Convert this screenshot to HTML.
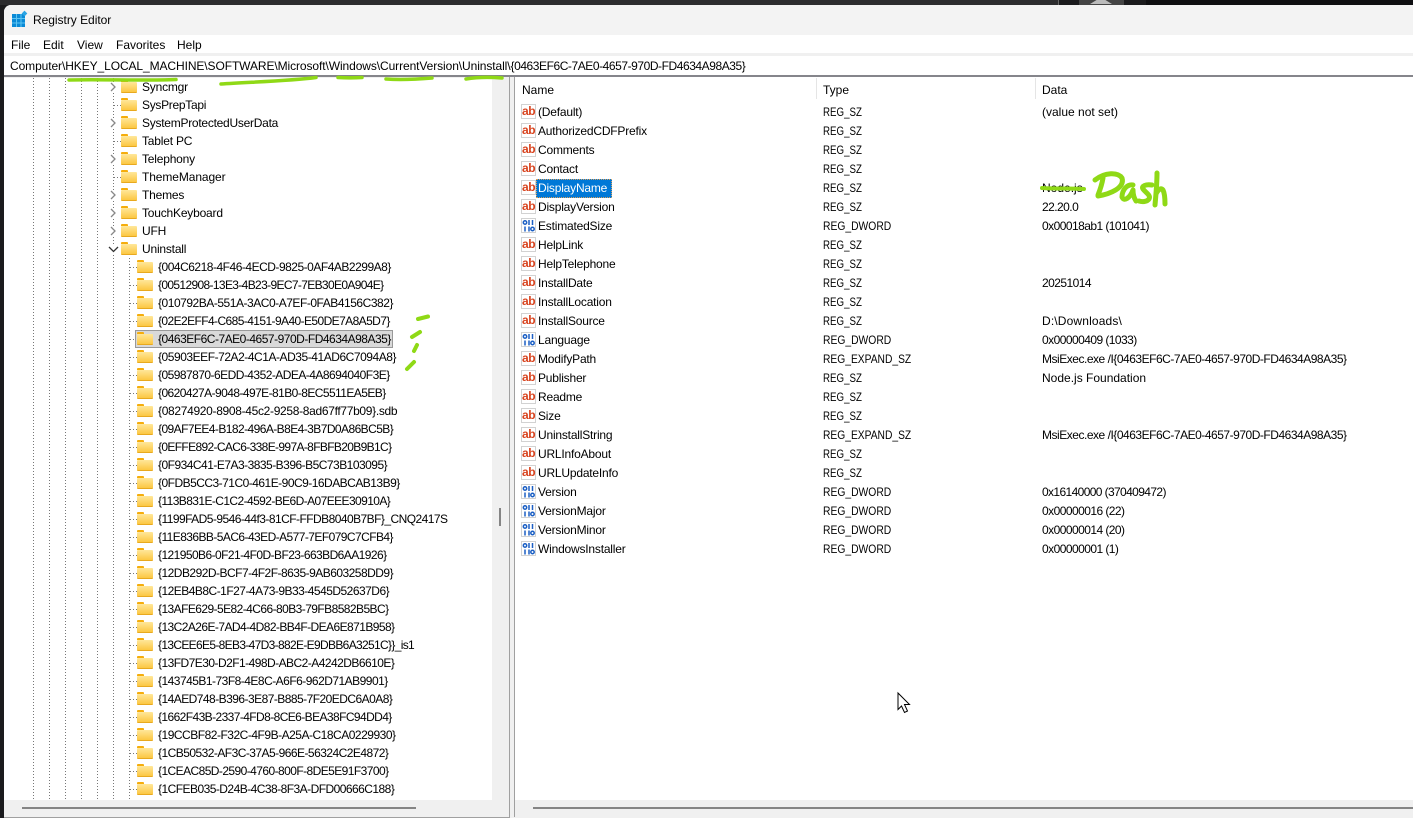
<!DOCTYPE html>
<html><head><meta charset="utf-8"><title>Registry Editor</title>
<style>
html,body{margin:0;padding:0;width:1413px;height:818px;overflow:hidden;background:#1b1b1d;font-family:"Liberation Sans",sans-serif;font-size:12px;color:#000}
.a{position:absolute}
#win{position:absolute;left:4px;top:5px;width:1409px;height:813px;background:#f0f0f0;border-top-left-radius:7px;overflow:hidden}
.m{position:absolute;top:38px;line-height:15px;font-size:12px}
#tree{position:absolute;left:4px;top:78px;width:488px;height:722px;background:#fff;overflow:hidden}
.r{position:absolute;height:18px;line-height:18px;white-space:nowrap;letter-spacing:-.54px}
.n{letter-spacing:-.2px}
.f{position:absolute;width:16px;height:11px;margin-top:1px;border-radius:1px;background:linear-gradient(#ffe79a,#fcc743);border:0 solid #e8a91f;border-bottom-width:1px;box-sizing:border-box}
.f:before{content:"";position:absolute;left:0;top:-2px;width:7px;height:2px;background:#f5ad0c;border-radius:1px 1px 0 0}
.v{position:absolute;width:1px;background:repeating-linear-gradient(#777 0 1px,transparent 1px 3px)}
.h{position:absolute;height:1px;background:repeating-linear-gradient(90deg,#777 0 1px,transparent 1px 3px)}
#list{position:absolute;left:515px;top:77px;width:898px;height:723px;background:#fff;overflow:hidden}
.t{position:absolute;line-height:19px;height:19px;white-space:nowrap;letter-spacing:-.2px}
.y{letter-spacing:0}
.x{letter-spacing:-.55px}
.g{letter-spacing:-.48px}
.sz,.ex,.dw{letter-spacing:0;transform-origin:0 0}
.sz{transform:scaleX(.81)}
.ex{transform:scaleX(.855)}
.dw{transform:scaleX(.86)}
.ab{position:absolute;width:15px;height:15px;left:6px;box-sizing:border-box;border:1px solid #d2d2d2;background:#fff;font-weight:bold;font-size:12px;line-height:12px;color:#d8431e;text-align:center;letter-spacing:-.4px}
.d{position:absolute;left:6px}
</style></head><body>
<div class="a" style="left:0;top:0;width:1058px;height:5px;background:#2c2c2e"></div>
<div class="a" style="left:1058px;top:0;width:1px;height:5px;background:#666"></div>
<div class="a" style="left:1079px;top:0;width:45px;height:5px;background:#444"></div>
<div class="a" style="left:1090px;top:0;width:22px;height:4px;background:#bbb;clip-path:polygon(30% 0,70% 0,100% 100%,0 100%)"></div>
<div class="a" style="left:1146px;top:0;width:267px;height:5px;background:#0f0f11"></div>
<div id="win"></div>
<div class="a" style="left:4px;top:5px;width:1409px;height:30px;background:#f3f3f3;border-top-left-radius:7px"></div>
<svg class="a" style="left:11px;top:10px" width="18" height="18" viewBox="0 0 18 18"><rect x="1" y="4" width="13" height="13" fill="#0a8ad6"/><path d="M5.500 4v13M10 4v13M1 8.500h13M1 13h13" stroke="#5cc4f2" stroke-width="1"/><rect x="11.500" y="1.500" width="4" height="4" fill="#2aa4e4" transform="rotate(45 13.500 3.500)"/></svg>
<div class="a" style="left:33px;top:12px;line-height:16px;letter-spacing:-.03px">Registry Editor</div>
<div class="a" style="left:4px;top:35px;width:1409px;height:18px;background:#fff"></div>
<div class="m" style="left:11px">File</div><div class="m" style="left:43px">Edit</div><div class="m" style="left:77px">View</div><div class="m" style="left:116px">Favorites</div><div class="m" style="left:177px">Help</div>
<div class="a" style="left:4px;top:56px;width:1409px;height:19px;background:#fff"></div>
<div class="a" style="left:10px;top:58px;line-height:17px;white-space:nowrap;letter-spacing:-.09px">Computer\HKEY_LOCAL_MACHINE\SOFTWARE\Microsoft\Windows\CurrentVersion\Uninstall\<span style="letter-spacing:-.44px">{0463EF6C-7AE0-4657-970D-FD4634A98A35}</span></div>
<div class="a" style="left:4px;top:75px;width:1409px;height:2px;background:#85858b"></div>

<div id="tree">
<div class="v" style="left:29px;top:0;height:722px"></div><div class="v" style="left:45px;top:0;height:722px"></div><div class="v" style="left:61px;top:0;height:722px"></div><div class="v" style="left:77px;top:0;height:722px"></div><div class="v" style="left:93px;top:0;height:722px"></div><div class="v" style="left:109px;top:0;height:722px"></div><div class="v" style="left:125px;top:180px;height:542px"></div>

<svg class="a" style="left:104px;top:4px;background:#fff" width="10" height="10"><path d="M3 1l4 4-4 4" fill="none" stroke="#888" stroke-width="1.300"/></svg><div class="f" style="left:117px;top:3px"></div><div class="r n" style="left:138px;top:0">Syncmgr</div>
<div class="h" style="left:110px;top:27px;width:7px"></div><div class="f" style="left:117px;top:21px"></div><div class="r n" style="left:138px;top:18px;letter-spacing:-.3px">SysPrepTapi</div>
<svg class="a" style="left:104px;top:40px;background:#fff" width="10" height="10"><path d="M3 1l4 4-4 4" fill="none" stroke="#888" stroke-width="1.300"/></svg><div class="f" style="left:117px;top:39px"></div><div class="r n" style="left:138px;top:36px;letter-spacing:-.26px">SystemProtectedUserData</div>
<div class="h" style="left:110px;top:63px;width:7px"></div><div class="f" style="left:117px;top:57px"></div><div class="r n" style="left:138px;top:54px">Tablet PC</div>
<svg class="a" style="left:104px;top:76px;background:#fff" width="10" height="10"><path d="M3 1l4 4-4 4" fill="none" stroke="#888" stroke-width="1.300"/></svg><div class="f" style="left:117px;top:75px"></div><div class="r n" style="left:138px;top:72px">Telephony</div>
<div class="h" style="left:110px;top:99px;width:7px"></div><div class="f" style="left:117px;top:93px"></div><div class="r n" style="left:138px;top:90px;letter-spacing:-.1px">ThemeManager</div>
<svg class="a" style="left:104px;top:112px;background:#fff" width="10" height="10"><path d="M3 1l4 4-4 4" fill="none" stroke="#888" stroke-width="1.300"/></svg><div class="f" style="left:117px;top:111px"></div><div class="r n" style="left:138px;top:108px">Themes</div>
<svg class="a" style="left:104px;top:130px;background:#fff" width="10" height="10"><path d="M3 1l4 4-4 4" fill="none" stroke="#888" stroke-width="1.300"/></svg><div class="f" style="left:117px;top:129px"></div><div class="r n" style="left:138px;top:126px">TouchKeyboard</div>
<svg class="a" style="left:104px;top:148px;background:#fff" width="10" height="10"><path d="M3 1l4 4-4 4" fill="none" stroke="#888" stroke-width="1.300"/></svg><div class="f" style="left:117px;top:147px"></div><div class="r n" style="left:138px;top:144px">UFH</div>
<svg class="a" style="left:104px;top:166px;background:#fff" width="11" height="10"><path d="M1 3l4.500 4.500L10 3" fill="none" stroke="#333" stroke-width="1.300"/></svg><div class="f" style="left:117px;top:165px"></div><div class="r n" style="left:138px;top:162px">Uninstall</div>

<div class="h" style="left:126px;top:189px;width:7px"></div><div class="f" style="left:133px;top:183px"></div><div class="r" style="left:154px;top:180px;letter-spacing:-.49px">{004C6218-4F46-4ECD-9825-0AF4AB2299A8}</div>
<div class="h" style="left:126px;top:207px;width:7px"></div><div class="f" style="left:133px;top:201px"></div><div class="r" style="left:154px;top:198px;letter-spacing:-.65px">{00512908-13E3-4B23-9EC7-7EB30E0A904E}</div>
<div class="h" style="left:126px;top:225px;width:7px"></div><div class="f" style="left:133px;top:219px"></div><div class="r" style="left:154px;top:216px;letter-spacing:-.47px">{010792BA-551A-3AC0-A7EF-0FAB4156C382}</div>
<div class="h" style="left:126px;top:243px;width:7px"></div><div class="f" style="left:133px;top:237px"></div><div class="r" style="left:154px;top:234px;letter-spacing:-.59px">{02E2EFF4-C685-4151-9A40-E50DE7A8A5D7}</div>
<div class="a" style="left:131px;top:252px;width:258px;height:18px;box-sizing:border-box;background:#d9d9d9;border:1px solid #999"></div>
<div class="h" style="left:126px;top:261px;width:5px"></div><div class="f" style="left:133px;top:255px"></div><div class="r" style="left:154px;top:252px;letter-spacing:-.49px">{0463EF6C-7AE0-4657-970D-FD4634A98A35}</div>
<div class="h" style="left:126px;top:279px;width:7px"></div><div class="f" style="left:133px;top:273px"></div><div class="r" style="left:154px;top:270px;letter-spacing:-.46px">{05903EEF-72A2-4C1A-AD35-41AD6C7094A8}</div>
<div class="h" style="left:126px;top:297px;width:7px"></div><div class="f" style="left:133px;top:291px"></div><div class="r" style="left:154px;top:288px">{05987870-6EDD-4352-ADEA-4A8694040F3E}</div>
<div class="h" style="left:126px;top:315px;width:7px"></div><div class="f" style="left:133px;top:309px"></div><div class="r" style="left:154px;top:306px;letter-spacing:-.57px">{0620427A-9048-497E-81B0-8EC5511EA5EB}</div>
<div class="h" style="left:126px;top:333px;width:7px"></div><div class="f" style="left:133px;top:327px"></div><div class="r" style="left:154px;top:324px;letter-spacing:-.32px">{08274920-8908-45c2-9258-8ad67ff77b09}.sdb</div>
<div class="h" style="left:126px;top:351px;width:7px"></div><div class="f" style="left:133px;top:345px"></div><div class="r" style="left:154px;top:342px;letter-spacing:-.57px">{09AF7EE4-B182-496A-B8E4-3B7D0A86BC5B}</div>
<div class="h" style="left:126px;top:369px;width:7px"></div><div class="f" style="left:133px;top:363px"></div><div class="r" style="left:154px;top:360px;letter-spacing:-.65px">{0EFFE892-CAC6-338E-997A-8FBFB20B9B1C}</div>
<div class="h" style="left:126px;top:387px;width:7px"></div><div class="f" style="left:133px;top:381px"></div><div class="r" style="left:154px;top:378px;letter-spacing:-.52px">{0F934C41-E7A3-3835-B396-B5C73B103095}</div>
<div class="h" style="left:126px;top:405px;width:7px"></div><div class="f" style="left:133px;top:399px"></div><div class="r" style="left:154px;top:396px;letter-spacing:-.52px">{0FDB5CC3-71C0-461E-90C9-16DABCAB13B9}</div>
<div class="h" style="left:126px;top:423px;width:7px"></div><div class="f" style="left:133px;top:417px"></div><div class="r" style="left:154px;top:414px;letter-spacing:-.59px">{113B831E-C1C2-4592-BE6D-A07EEE30910A}</div>
<div class="h" style="left:126px;top:441px;width:7px"></div><div class="f" style="left:133px;top:435px"></div><div class="r" style="left:154px;top:432px;letter-spacing:-.55px">{1199FAD5-9546-44f3-81CF-FFDB8040B7BF}_CNQ2417S</div>
<div class="h" style="left:126px;top:459px;width:7px"></div><div class="f" style="left:133px;top:453px"></div><div class="r" style="left:154px;top:450px;letter-spacing:-.57px">{11E836BB-5AC6-43ED-A577-7EF079C7CFB4}</div>
<div class="h" style="left:126px;top:477px;width:7px"></div><div class="f" style="left:133px;top:471px"></div><div class="r" style="left:154px;top:468px;letter-spacing:-.57px">{121950B6-0F21-4F0D-BF23-663BD6AA1926}</div>
<div class="h" style="left:126px;top:495px;width:7px"></div><div class="f" style="left:133px;top:489px"></div><div class="r" style="left:154px;top:486px;letter-spacing:-.52px">{12DB292D-BCF7-4F2F-8635-9AB603258DD9}</div>
<div class="h" style="left:126px;top:513px;width:7px"></div><div class="f" style="left:133px;top:507px"></div><div class="r" style="left:154px;top:504px;letter-spacing:-.52px">{12EB4B8C-1F27-4A73-9B33-4545D52637D6}</div>
<div class="h" style="left:126px;top:531px;width:7px"></div><div class="f" style="left:133px;top:525px"></div><div class="r" style="left:154px;top:522px;letter-spacing:-.57px">{13AFE629-5E82-4C66-80B3-79FB8582B5BC}</div>
<div class="h" style="left:126px;top:549px;width:7px"></div><div class="f" style="left:133px;top:543px"></div><div class="r" style="left:154px;top:540px;letter-spacing:-.57px">{13C2A26E-7AD4-4D82-BB4F-DEA6E871B958}</div>
<div class="h" style="left:126px;top:567px;width:7px"></div><div class="f" style="left:133px;top:561px"></div><div class="r" style="left:154px;top:558px;letter-spacing:-.67px">{13CEE6E5-8EB3-47D3-882E-E9DBB6A3251C}}_is1</div>
<div class="h" style="left:126px;top:585px;width:7px"></div><div class="f" style="left:133px;top:579px"></div><div class="r" style="left:154px;top:576px">{13FD7E30-D2F1-498D-ABC2-A4242DB6610E}</div>
<div class="h" style="left:126px;top:603px;width:7px"></div><div class="f" style="left:133px;top:597px"></div><div class="r" style="left:154px;top:594px;letter-spacing:-.52px">{143745B1-73F8-4E8C-A6F6-962D71AB9901}</div>
<div class="h" style="left:126px;top:621px;width:7px"></div><div class="f" style="left:133px;top:615px"></div><div class="r" style="left:154px;top:612px">{14AED748-B396-3E87-B885-7F20EDC6A0A8}</div>
<div class="h" style="left:126px;top:639px;width:7px"></div><div class="f" style="left:133px;top:633px"></div><div class="r" style="left:154px;top:630px;letter-spacing:-.59px">{1662F43B-2337-4FD8-8CE6-BEA38FC94DD4}</div>
<div class="h" style="left:126px;top:657px;width:7px"></div><div class="f" style="left:133px;top:651px"></div><div class="r" style="left:154px;top:648px;letter-spacing:-.49px">{19CCBF82-F32C-4F9B-A25A-C18CA0229930}</div>
<div class="h" style="left:126px;top:675px;width:7px"></div><div class="f" style="left:133px;top:669px"></div><div class="r" style="left:154px;top:666px">{1CB50532-AF3C-37A5-966E-56324C2E4872}</div>
<div class="h" style="left:126px;top:693px;width:7px"></div><div class="f" style="left:133px;top:687px"></div><div class="r" style="left:154px;top:684px;letter-spacing:-.57px">{1CEAC85D-2590-4760-800F-8DE5E91F3700}</div>
<div class="h" style="left:126px;top:711px;width:7px"></div><div class="f" style="left:133px;top:705px"></div><div class="r" style="left:154px;top:702px">{1CFEB035-D24B-4C38-8F3A-DFD00666C188}</div>
</div>

<div class="a" style="left:499px;top:508px;width:2px;height:18px;background:#858585"></div>
<div class="a" style="left:22px;top:807px;width:394px;height:2px;background:#858585"></div>
<div class="a" style="left:509px;top:77px;width:1px;height:740px;background:#a0a0a0"></div>
<div class="a" style="left:514px;top:77px;width:1px;height:740px;background:#a0a0a0"></div>
<div class="a" style="left:4px;top:817px;width:506px;height:1px;background:#a0a0a0"></div>
<div class="a" style="left:533px;top:807px;width:880px;height:2px;background:#858585"></div>

<div id="list"><div class="a" style="left:0;top:4px;width:898px;height:719px">
<div class="a" style="left:301px;top:-3px;width:1px;height:21px;background:#e5e5e5"></div>
<div class="a" style="left:520px;top:-3px;width:1px;height:21px;background:#e5e5e5"></div>
<div class="t y" style="left:7px;top:0">Name</div><div class="t y" style="left:308px;top:0">Type</div><div class="t y" style="left:527px;top:0">Data</div>

<div class="ab" style="top:23px">ab</div><div class="t" style="left:23px;top:22px">(Default)</div><div class="t sz" style="left:308px;top:22px">REG_SZ</div><div class="t y" style="left:527px;top:22px">(value not set)</div>
<div class="ab" style="top:42px">ab</div><div class="t" style="left:23px;top:41px">AuthorizedCDFPrefix</div><div class="t sz" style="left:308px;top:41px">REG_SZ</div>
<div class="ab" style="top:61px">ab</div><div class="t" style="left:23px;top:60px">Comments</div><div class="t sz" style="left:308px;top:60px">REG_SZ</div>
<div class="ab" style="top:80px">ab</div><div class="t" style="left:23px;top:79px">Contact</div><div class="t sz" style="left:308px;top:79px">REG_SZ</div>
<div class="ab" style="top:99px">ab</div><div class="a" style="left:21px;top:98px;width:76px;height:19px;box-sizing:border-box;background:#0078d7;border:1px dotted #d8a060"></div><div class="t" style="left:23px;top:98px;color:#fff">DisplayName</div><div class="t sz" style="left:308px;top:98px">REG_SZ</div><div class="t y" style="left:527px;top:98px">Node.js</div>
<div class="ab" style="top:118px">ab</div><div class="t" style="left:23px;top:117px">DisplayVersion</div><div class="t sz" style="left:308px;top:117px">REG_SZ</div><div class="t x" style="left:527px;top:117px">22.20.0</div>
<svg class="d" style="top:137px" width="15" height="15"><rect x=".5" y=".5" width="14" height="14" fill="#fff" stroke="#d2d2d2"/><g fill="none" stroke="#1b5fc4" stroke-width="1.500"><circle cx="4" cy="4.500" r="1.700"/><path d="M8 2v5M11.500 2v5M4 8.500v5M8 8.500v5"/><circle cx="11.500" cy="11" r="1.700"/></g></svg><div class="t" style="left:23px;top:136px">EstimatedSize</div><div class="t dw" style="left:308px;top:136px">REG_DWORD</div><div class="t x" style="left:527px;top:136px">0x00018ab1 (101041)</div>
<div class="ab" style="top:156px">ab</div><div class="t" style="left:23px;top:155px">HelpLink</div><div class="t sz" style="left:308px;top:155px">REG_SZ</div>
<div class="ab" style="top:175px">ab</div><div class="t" style="left:23px;top:174px">HelpTelephone</div><div class="t sz" style="left:308px;top:174px">REG_SZ</div>
<div class="ab" style="top:194px">ab</div><div class="t" style="left:23px;top:193px">InstallDate</div><div class="t sz" style="left:308px;top:193px">REG_SZ</div><div class="t x" style="left:527px;top:193px">20251014</div>
<div class="ab" style="top:213px">ab</div><div class="t" style="left:23px;top:212px">InstallLocation</div><div class="t sz" style="left:308px;top:212px">REG_SZ</div>
<div class="ab" style="top:232px">ab</div><div class="t" style="left:23px;top:231px">InstallSource</div><div class="t sz" style="left:308px;top:231px">REG_SZ</div><div class="t y" style="left:527px;top:231px;letter-spacing:.15px">D:\Downloads\</div>
<svg class="d" style="top:251px" width="15" height="15"><rect x=".5" y=".5" width="14" height="14" fill="#fff" stroke="#d2d2d2"/><g fill="none" stroke="#1b5fc4" stroke-width="1.500"><circle cx="4" cy="4.500" r="1.700"/><path d="M8 2v5M11.500 2v5M4 8.500v5M8 8.500v5"/><circle cx="11.500" cy="11" r="1.700"/></g></svg><div class="t" style="left:23px;top:250px">Language</div><div class="t dw" style="left:308px;top:250px">REG_DWORD</div><div class="t x" style="left:527px;top:250px">0x00000409 (1033)</div>
<div class="ab" style="top:270px">ab</div><div class="t" style="left:23px;top:269px">ModifyPath</div><div class="t ex" style="left:308px;top:269px">REG_EXPAND_SZ</div><div class="t g" style="left:527px;top:269px">MsiExec.exe /I{0463EF6C-7AE0-4657-970D-FD4634A98A35}</div>
<div class="ab" style="top:289px">ab</div><div class="t" style="left:23px;top:288px">Publisher</div><div class="t sz" style="left:308px;top:288px">REG_SZ</div><div class="t y" style="left:527px;top:288px">Node.js Foundation</div>
<div class="ab" style="top:308px">ab</div><div class="t" style="left:23px;top:307px">Readme</div><div class="t sz" style="left:308px;top:307px">REG_SZ</div>
<div class="ab" style="top:327px">ab</div><div class="t" style="left:23px;top:326px">Size</div><div class="t sz" style="left:308px;top:326px">REG_SZ</div>
<div class="ab" style="top:346px">ab</div><div class="t" style="left:23px;top:345px">UninstallString</div><div class="t ex" style="left:308px;top:345px">REG_EXPAND_SZ</div><div class="t g" style="left:527px;top:345px">MsiExec.exe /I{0463EF6C-7AE0-4657-970D-FD4634A98A35}</div>
<div class="ab" style="top:365px">ab</div><div class="t" style="left:23px;top:364px">URLInfoAbout</div><div class="t sz" style="left:308px;top:364px">REG_SZ</div>
<div class="ab" style="top:384px">ab</div><div class="t" style="left:23px;top:383px">URLUpdateInfo</div><div class="t sz" style="left:308px;top:383px">REG_SZ</div>
<svg class="d" style="top:403px" width="15" height="15"><rect x=".5" y=".5" width="14" height="14" fill="#fff" stroke="#d2d2d2"/><g fill="none" stroke="#1b5fc4" stroke-width="1.500"><circle cx="4" cy="4.500" r="1.700"/><path d="M8 2v5M11.500 2v5M4 8.500v5M8 8.500v5"/><circle cx="11.500" cy="11" r="1.700"/></g></svg><div class="t" style="left:23px;top:402px">Version</div><div class="t dw" style="left:308px;top:402px">REG_DWORD</div><div class="t x" style="left:527px;top:402px;letter-spacing:-.62px">0x16140000 (370409472)</div>
<svg class="d" style="top:422px" width="15" height="15"><rect x=".5" y=".5" width="14" height="14" fill="#fff" stroke="#d2d2d2"/><g fill="none" stroke="#1b5fc4" stroke-width="1.500"><circle cx="4" cy="4.500" r="1.700"/><path d="M8 2v5M11.500 2v5M4 8.500v5M8 8.500v5"/><circle cx="11.500" cy="11" r="1.700"/></g></svg><div class="t" style="left:23px;top:421px">VersionMajor</div><div class="t dw" style="left:308px;top:421px">REG_DWORD</div><div class="t x" style="left:527px;top:421px">0x00000016 (22)</div>
<svg class="d" style="top:441px" width="15" height="15"><rect x=".5" y=".5" width="14" height="14" fill="#fff" stroke="#d2d2d2"/><g fill="none" stroke="#1b5fc4" stroke-width="1.500"><circle cx="4" cy="4.500" r="1.700"/><path d="M8 2v5M11.500 2v5M4 8.500v5M8 8.500v5"/><circle cx="11.500" cy="11" r="1.700"/></g></svg><div class="t" style="left:23px;top:440px">VersionMinor</div><div class="t dw" style="left:308px;top:440px">REG_DWORD</div><div class="t x" style="left:527px;top:440px">0x00000014 (20)</div>
<svg class="d" style="top:460px" width="15" height="15"><rect x=".5" y=".5" width="14" height="14" fill="#fff" stroke="#d2d2d2"/><g fill="none" stroke="#1b5fc4" stroke-width="1.500"><circle cx="4" cy="4.500" r="1.700"/><path d="M8 2v5M11.500 2v5M4 8.500v5M8 8.500v5"/><circle cx="11.500" cy="11" r="1.700"/></g></svg><div class="t" style="left:23px;top:459px">WindowsInstaller</div><div class="t dw" style="left:308px;top:459px">REG_DWORD</div><div class="t x" style="left:527px;top:459px">0x00000001 (1)</div>
</div></div>

<svg class="a" style="left:0;top:0" width="1413" height="818" viewBox="0 0 1413 818">
<g fill="none" stroke="#8fd916" stroke-linecap="round" stroke-linejoin="round">
<g stroke-width="3.500"><path d="M69 80C100 79 140 81 176 79.500"/><path d="M221 84C250 82 290 81 316 77.500"/><path d="M338 77.500C346 78 354 78 362 77.500"/><path d="M386 79C400 80 420 79 432 78"/><path d="M466 79C478 77 490 77 502 78"/></g>
<g stroke-width="4"><path d="M418 319L428 316.500"/><path d="M412 337L420 332"/><path d="M414 351L417 345"/><path d="M407 369L414 362"/></g>
<path d="M1042 188C1055 189 1072 188 1084 189" stroke-width="4"/>
<g stroke-width="5"><path d="M1103 178C1102 184 1100 190 1098 195"/><path d="M1095 180C1105 172 1118 172 1122 178C1125 188 1110 194 1098 196"/><path d="M1133 185C1127 184 1122 190 1122 197C1124 202 1130 198 1133 190C1133 194 1134 198 1136 201"/><path d="M1152 185C1146 184 1141 186 1143 189C1146 193 1151 195 1149 199C1147 202 1142 202 1139 201"/><path d="M1157 173C1157 184 1156 194 1155 205M1156 194C1158 190 1161 187 1163 190C1165 194 1165 200 1165 204"/></g>
</g>
<path d="M898 693V709.500L901.500 706L904.500 712.500L907.500 711L904.500 704.500H909.500Z" fill="#fff" stroke="#000" stroke-width="1"/>
</svg>
</body></html>
